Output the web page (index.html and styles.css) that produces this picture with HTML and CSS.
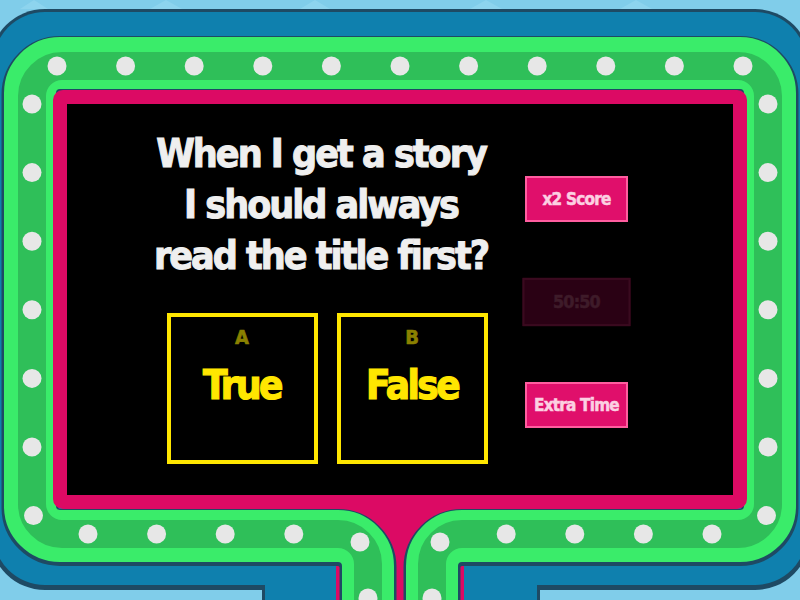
FILE: index.html
```html
<!DOCTYPE html>
<html>
	<head>
		<meta charset="UTF-8">
		<title>Quiz show</title>
		<link rel="stylesheet" href="styles.css">
	</head>
	<body>
		<div class="stage">
			<!-- stage frame: blue surround, green marquee with bulbs, pink stand -->
			<svg class="frame" width="800" height="600" viewBox="0 0 800 600">
				<rect width="800" height="600" fill="#80cdea"/>
				<g fill="#8dd4ee">
					<polygon points="20,9 34,0 48,9"/>
					<polygon points="150,9 166,0 182,9"/>
					<polygon points="300,9 315,0 330,9"/>
					<polygon points="470,9 486,0 502,9"/>
					<polygon points="620,9 636,0 652,9"/>
				</g>
				<!-- blue surround -->
				<rect x="-10" y="9" width="820" height="581" rx="55" fill="#1e4a64"/>
				<rect x="262" y="540" width="278" height="60" fill="#1e4a64"/>
				<rect x="-7" y="12" width="814" height="573" rx="52" fill="#0f80ae"/>
				<rect x="265" y="540" width="272" height="60" fill="#0f80ae"/>
				<!-- pink neck under the screen -->
				<rect x="336" y="495" width="128" height="105" fill="#dc0a64"/>
				<!-- marquee track -->
				<path class="track-edge" d="M368 620 V566 A30 30 0 0 0 338 536 H60 A30 30 0 0 1 30 506 V93 A30 30 0 0 1 60 63 H740 A30 30 0 0 1 770 93 V506 A30 30 0 0 1 740 536 H462 A30 30 0 0 0 432 566 V620"/>
				<path class="track-light" d="M368 620 V566 A30 30 0 0 0 338 536 H60 A30 30 0 0 1 30 506 V93 A30 30 0 0 1 60 63 H740 A30 30 0 0 1 770 93 V506 A30 30 0 0 1 740 536 H462 A30 30 0 0 0 432 566 V620"/>
				<path class="track-dark" d="M368 620 V564 A30 30 0 0 0 338 534 H62 A30 30 0 0 1 32 504 V96 A30 30 0 0 1 62 66 H738 A30 30 0 0 1 768 96 V504 A30 30 0 0 1 738 534 H462 A30 30 0 0 0 432 564 V620"/>
				<g class="bulbs">
					<circle cx="57" cy="66" r="9.5"/>
					<circle cx="125.6" cy="66" r="9.5"/>
					<circle cx="194.2" cy="66" r="9.5"/>
					<circle cx="262.8" cy="66" r="9.5"/>
					<circle cx="331.4" cy="66" r="9.5"/>
					<circle cx="400" cy="66" r="9.5"/>
					<circle cx="468.6" cy="66" r="9.5"/>
					<circle cx="537.2" cy="66" r="9.5"/>
					<circle cx="605.8" cy="66" r="9.5"/>
					<circle cx="674.4" cy="66" r="9.5"/>
					<circle cx="743" cy="66" r="9.5"/>

					<circle cx="32" cy="104" r="9.5"/>
					<circle cx="32" cy="172.6" r="9.5"/>
					<circle cx="32" cy="241.2" r="9.5"/>
					<circle cx="32" cy="309.8" r="9.5"/>
					<circle cx="32" cy="378.4" r="9.5"/>
					<circle cx="32" cy="447" r="9.5"/>
					<circle cx="33.5" cy="515.6" r="9.5"/>

					<circle cx="768" cy="104" r="9.5"/>
					<circle cx="768" cy="172.6" r="9.5"/>
					<circle cx="768" cy="241.2" r="9.5"/>
					<circle cx="768" cy="309.8" r="9.5"/>
					<circle cx="768" cy="378.4" r="9.5"/>
					<circle cx="768" cy="447" r="9.5"/>
					<circle cx="766.5" cy="515.6" r="9.5"/>

					<circle cx="88" cy="534" r="9.5"/>
					<circle cx="156.6" cy="534" r="9.5"/>
					<circle cx="225.2" cy="534" r="9.5"/>
					<circle cx="293.8" cy="534" r="9.5"/>
					<circle cx="360" cy="542" r="9.5"/>
					<circle cx="368" cy="598" r="9.5"/>

					<circle cx="712" cy="534" r="9.5"/>
					<circle cx="643.4" cy="534" r="9.5"/>
					<circle cx="574.8" cy="534" r="9.5"/>
					<circle cx="506.2" cy="534" r="9.5"/>
					<circle cx="440" cy="542" r="9.5"/>
					<circle cx="432" cy="598" r="9.5"/>
				</g>
			</svg>

			<div class="screen">
				<div class="main">
					<h1 class="question">When I get a story<br>I should always<br>read the title first?</h1>
					<div class="answers">
						<div class="answer">
							<span class="letter">A</span>
							<span class="word">True</span>
						</div>
						<div class="answer">
							<span class="letter">B</span>
							<span class="word">False</span>
						</div>
					</div>
				</div>
				<div class="powerups">
					<button class="power">x2 Score</button>
					<button class="power off">50:50</button>
					<button class="power">Extra Time</button>
				</div>
			</div>
		</div>
	</body>
</html>
```

FILE: styles.css
```css
*{
	margin:0;padding:0;
}
body{
	background:#80cdea;
	font-family:"DejaVu Sans Condensed","DejaVu Sans",sans-serif;
	font-stretch:condensed;
	font-weight:bold;
}
/*舞台*/
.stage{
	width:800px;
	height:600px;
	display:grid;
	overflow:hidden;
}
.frame,
.screen{
	grid-area:1/1;
}
.frame{
	display:block;
}
.track-edge{
	fill:none;
	stroke:#1e4a64;
	stroke-width:57;
	transform:translateY(1.5px);
}
.track-light{
	fill:none;
	stroke:#3aec6a;
	stroke-width:52;
}
.track-dark{
	fill:none;
	stroke:#2fbf59;
	stroke-width:28;
}
.bulbs circle{
	fill:#e7e7e7;
}
/*屏幕*/
.screen{
	align-self:start;
	justify-self:start;
	margin:90px 0 0 53px;
	width:694px;
	height:419px;
	box-sizing:border-box;
	border:14px solid #dc0a64;
	border-radius:10px;
	background:#000;
	display:flex;
}
.main{
	width:396px;
	padding-left:62px;
}
.question{
	padding:24px 12px 0 0;
	font-size:39px;
	line-height:51px;
	letter-spacing:-2px;
	color:#efefef;
	-webkit-text-stroke:1px #efefef;
	text-align:center;
	font-weight:bold;
}
.answers{
	margin-top:32px;
	display:flex;
	justify-content:center;
	gap:19px;
}
.answer{
	width:151px;
	height:151px;
	box-sizing:border-box;
	border:4px solid #ffe600;
	padding-top:8px;
	display:flex;
	flex-direction:column;
	align-items:center;
}
.letter{
	font-size:20px;
	line-height:24px;
	color:#8a8000;
	-webkit-text-stroke:0.6px #8a8000;
}
.word{
	margin-top:12px;
	font-size:40px;
	line-height:48px;
	letter-spacing:-2.5px;
	color:#ffe600;
	-webkit-text-stroke:1.2px #ffe600;
}
/*道具按钮*/
.powerups{
	width:103px;
	padding-top:72px;
	display:flex;
	flex-direction:column;
	gap:57px;
}
.power{
	width:103px;
	height:46px;
	box-sizing:border-box;
	border:2px solid #ff5d9f;
	background:#e00f6b;
	color:#fcd0e2;
	-webkit-text-stroke:0.5px #fcd0e2;
	font-family:inherit;
	font-stretch:condensed;
	font-weight:bold;
	font-size:17px;
	letter-spacing:-0.8px;
}
.power.off{
	transform:scale(1.05);
	background:#2a0114;
	border-color:#3a0a1f;
	color:#3e1b29;
	-webkit-text-stroke:0.5px #3e1b29;
}
```
